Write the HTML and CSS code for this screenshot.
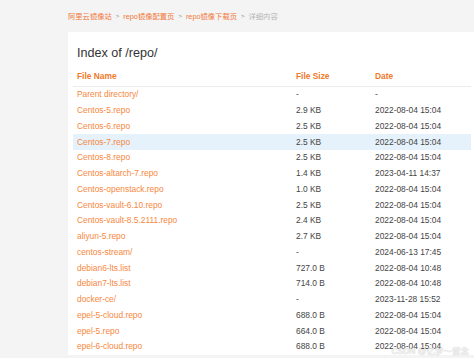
FILE: index.html
```html
<!DOCTYPE html>
<html lang="zh">
<head>
<meta charset="utf-8">
<title>Index of /repo/</title>
<link rel="stylesheet" href="styles.css">
</head>
<body>
<div class="crumbs">
  <a class="crumb">阿里云镜像站</a><span class="sep">&gt;</span><a class="crumb">repo镜像配置页</a><span class="sep">&gt;</span><a class="crumb">repo镜像下载页</a><span class="sep">&gt;</span><span class="current">详细内容</span>
</div>
<div class="panel">
  <h1 class="title">Index of /repo/</h1>
  <table class="list">
    <thead>
      <tr><th class="c1">File Name</th><th class="c2">File Size</th><th class="c3">Date</th></tr>
    </thead>
    <tbody>
      <tr><td><a>Parent directory/</a></td><td>-</td><td>-</td></tr>
      <tr><td><a>Centos-5.repo</a></td><td>2.9 KB</td><td>2022-08-04 15:04</td></tr>
      <tr><td><a>Centos-6.repo</a></td><td>2.5 KB</td><td>2022-08-04 15:04</td></tr>
      <tr class="hover"><td><a>Centos-7.repo</a></td><td>2.5 KB</td><td>2022-08-04 15:04</td></tr>
      <tr><td><a>Centos-8.repo</a></td><td>2.5 KB</td><td>2022-08-04 15:04</td></tr>
      <tr><td><a>Centos-altarch-7.repo</a></td><td>1.4 KB</td><td>2023-04-11 14:37</td></tr>
      <tr><td><a>Centos-openstack.repo</a></td><td>1.0 KB</td><td>2022-08-04 15:04</td></tr>
      <tr><td><a>Centos-vault-6.10.repo</a></td><td>2.5 KB</td><td>2022-08-04 15:04</td></tr>
      <tr><td><a>Centos-vault-8.5.2111.repo</a></td><td>2.4 KB</td><td>2022-08-04 15:04</td></tr>
      <tr><td><a>aliyun-5.repo</a></td><td>2.7 KB</td><td>2022-08-04 15:04</td></tr>
      <tr><td><a>centos-stream/</a></td><td>-</td><td>2024-06-13 17:45</td></tr>
      <tr><td><a>debian6-lts.list</a></td><td>727.0 B</td><td>2022-08-04 10:48</td></tr>
      <tr><td><a>debian7-lts.list</a></td><td>714.0 B</td><td>2022-08-04 10:48</td></tr>
      <tr><td><a>docker-ce/</a></td><td>-</td><td>2023-11-28 15:52</td></tr>
      <tr><td><a>epel-5-cloud.repo</a></td><td>688.0 B</td><td>2022-08-04 15:04</td></tr>
      <tr><td><a>epel-5.repo</a></td><td>664.0 B</td><td>2022-08-04 15:04</td></tr>
      <tr><td><a>epel-6-cloud.repo</a></td><td>688.0 B</td><td>2022-08-04 15:04</td></tr>
    </tbody>
  </table>
</div>
<div class="watermark">CSDN @亿梦～留念</div>
</body>
</html>
```
FILE: styles.css
```css
html, body {
  margin: 0;
  padding: 0;
}
body {
  width: 474px;
  height: 358px;
  overflow: hidden;
  background: #f4f4f4;
  font-family: "Liberation Sans", Arial, "Noto Sans CJK SC", sans-serif;
  position: relative;
}
.crumbs {
  height: 32px;
  box-sizing: border-box;
  padding: 11px 0 0 68px;
  font-size: 7.3px;
  line-height: 11px;
  white-space: nowrap;
  display: flex;
  align-items: flex-start;
}
.crumbs .crumb {
  color: #f2783a;
}
.crumbs .sep {
  color: #888;
  font-size: 6px;
  margin: 0 4px;
}
.crumbs .current {
  color: #b5b5b5;
}
.panel {
  margin-left: 68px;
  height: 323px;
  box-sizing: border-box;
  background: #fff;
  padding: 13px 0 0 5px;
  overflow: hidden;
}
.title {
  margin: 0 0 5px 4px;
  font-size: 12.6px;
  line-height: 16px;
  font-weight: normal;
  color: #333;
}
.list {
  border-collapse: collapse;
  width: 398px;
  font-size: 8.4px;
  table-layout: fixed;
}
.list th {
  text-align: left;
  color: #ee7a2b;
  font-weight: bold;
  height: 19.6px;
  padding: 0 0 0 4px;
  border-bottom: 1px solid #ececec;
}
.list th.c1 { width: 215px; }
.list th.c2 { width: 75px; }
.list td {
  height: 15.75px;
  padding: 0 0 0 4px;
  color: #444;
  white-space: nowrap;
}
.list td a {
  color: #f7873e;
}
.list tr.hover td {
  background: #e6f2fb;
}
.watermark {
  position: absolute;
  right: 5px;
  bottom: 2px;
  font-size: 8.5px;
  color: rgba(255, 255, 255, 0.85);
  text-shadow: 0 0 1px rgba(0, 0, 0, 0.35);
  font-family: "Liberation Sans", "Noto Sans CJK SC", sans-serif;
}
```
